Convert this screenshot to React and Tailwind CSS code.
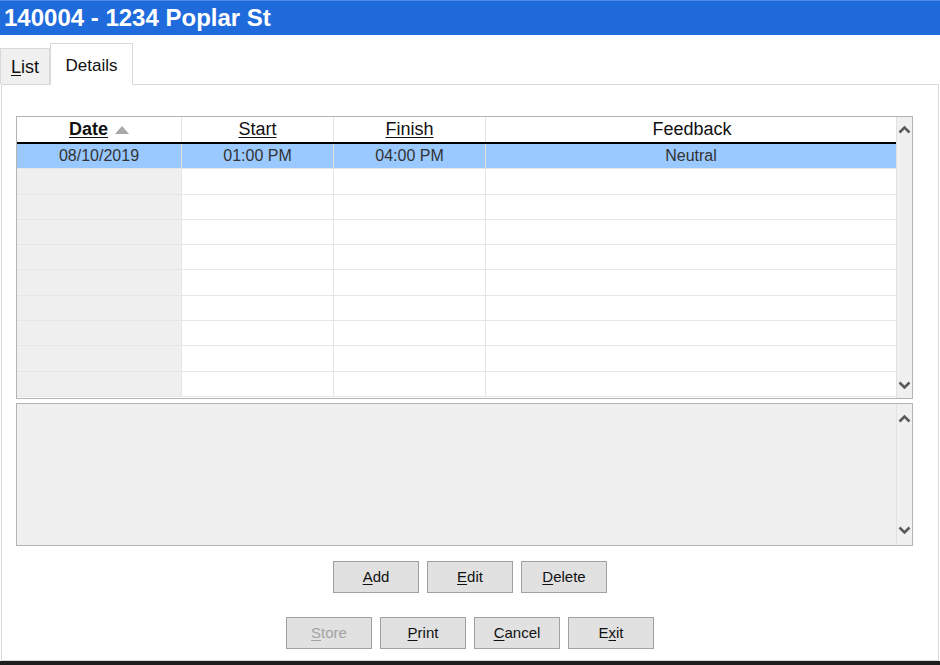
import React from 'react';

const COLS = [
  { key: 'date', w: 'w-[165px]' },
  { key: 'start', w: 'w-[152px]' },
  { key: 'finish', w: 'w-[152px]' },
  { key: 'feedback', w: 'flex-1' },
];

const ROWS = [
  { date: '08/10/2019', start: '01:00 PM', finish: '04:00 PM', feedback: 'Neutral' },
  ...Array.from({ length: 9 }, () => null),
];

function Chevron({ up }) {
  return (
    <svg width="13" height="9" viewBox="0 0 13 9" className="block">
      <polyline
        points={up ? '1.5,7.5 6.5,2.5 11.5,7.5' : '1.5,1.5 6.5,6.5 11.5,1.5'}
        fill="none"
        stroke="#5a5a5a"
        strokeWidth="2.6"
      />
    </svg>
  );
}

function ScrollBar({ py }) {
  return (
    <div className={`flex w-[16px] flex-col items-center justify-between border-l border-[#e2e2e2] bg-[#f0f0f0] ${py}`}>
      <Chevron up />
      <Chevron />
    </div>
  );
}

function Key({ label, k }) {
  // underline the access key letter
  const i = label.indexOf(k);
  return (
    <>
      {label.slice(0, i)}
      <span className="underline underline-offset-2">{k}</span>
      {label.slice(i + 1)}
    </>
  );
}

function WinButton({ label, k, disabled }) {
  return (
    <button
      type="button"
      className={`h-[32px] w-[86px] border border-[#a0a0a0] bg-[#e1e1e1] text-[15px] ${
        disabled ? 'text-[#a3a3a3]' : 'text-[#111]'
      }`}
    >
      <Key label={label} k={k} />
    </button>
  );
}

export default function App() {
  return (
    <div className="h-[665px] w-[940px] overflow-hidden bg-white font-['Liberation_Sans',Arial,sans-serif]">
      <div className="flex h-[35px] items-center border-t border-[#4d8ae6] bg-[#1f6bdc] pl-[4px] text-[24px] font-bold text-white">
        140004 - 1234 Poplar St
      </div>

      <div className="flex h-[49px] items-end pl-0">
        <div className="flex h-[36px] w-[50px] items-center justify-center border border-b-0 border-[#d9d9d9] bg-[#f0f0f0] pt-[2px] text-[18px] text-[#111]">
          <Key label="List" k="L" />
        </div>
        <div className="relative -mb-px flex h-[42px] w-[83px] items-start justify-center border border-b-0 border-[#d9d9d9] bg-white pt-[9px] text-[17px] text-[#111]">
          Details
        </div>
      </div>

      <div className="ml-[1px] h-[577px] w-[938px] border border-[#d9d9d9] pl-[14px] pt-[31px]">
        <div className="flex h-[283px] w-[897px] border border-[#b4b4b4]">
          <div className="flex flex-1 flex-col">
            <div className="flex h-[27px] border-b-2 border-black text-[18px] text-[#111]">
              <div className="flex w-[165px] items-center justify-center gap-[7px] border-r border-[#e4e4e4]">
                <span className="font-bold underline underline-offset-2">Date</span>
                <svg width="14" height="8" viewBox="0 0 14 8">
                  <polygon points="0,8 7,0 14,8" fill="#a8a8a8" />
                </svg>
              </div>
              <div className="flex w-[152px] items-center justify-center border-r border-[#e4e4e4]">
                <span className="underline underline-offset-2">Start</span>
              </div>
              <div className="flex w-[152px] items-center justify-center border-r border-[#e4e4e4]">
                <span className="underline underline-offset-2">Finish</span>
              </div>
              <div className="flex flex-1 items-center justify-center pl-[2px]">Feedback</div>
            </div>
            {ROWS.map((row, idx) => (
              <div
                key={idx}
                className={`flex h-[25.3px] border-b border-[#e6e6e6] text-[16px] ${
                  row ? 'bg-[#99c9ff] text-[#333]' : ''
                }`}
              >
                {COLS.map((c, ci) => (
                  <div
                    key={c.key}
                    className={`flex items-center justify-center ${c.w} ${
                      ci < 3 ? 'border-r border-[#e4e4e4]' : ''
                    } ${!row && ci === 0 ? 'bg-[#efefef]' : ''}`}
                  >
                    {row ? row[c.key] : ''}
                  </div>
                ))}
              </div>
            ))}
          </div>
          <ScrollBar py="py-[8px]" />
        </div>

        <div className="mt-[4px] flex h-[143px] w-[897px] border border-[#b4b4b4] bg-[#f0f0f0]">
          <div className="flex-1" />
          <ScrollBar py="py-[10px]" />
        </div>

        <div className="-ml-[14px] mt-[15px] flex w-[936px] justify-center gap-[8px]">
          <WinButton label="Add" k="A" />
          <WinButton label="Edit" k="E" />
          <WinButton label="Delete" k="D" />
        </div>
        <div className="-ml-[14px] mt-[24px] flex w-[936px] justify-center gap-[8px]">
          <WinButton label="Store" k="S" disabled />
          <WinButton label="Print" k="P" />
          <WinButton label="Cancel" k="C" />
          <WinButton label="Exit" k="x" />
        </div>
      </div>
      <div className="h-[10px] bg-[#1e1e1e]" />
    </div>
  );
}
